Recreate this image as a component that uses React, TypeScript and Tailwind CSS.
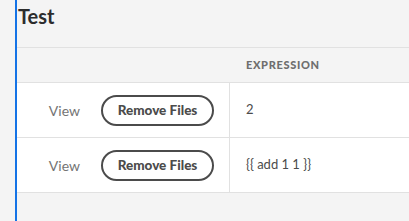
export default function App() {
  const rows = ["2", "{{ add 1 1 }}"];

  return (
    <div className="flex h-[221px] w-full bg-[#f4f4f4] font-['Lato',sans-serif]">
      <div className="w-[15px] shrink-0" />
      <div className="flex-1 border-l-2 border-[#1473e6]">
        <h1 className="flex h-[47px] items-start pl-[1px] pt-[2px] text-[20px] font-bold leading-[28px] text-[#2c2c2c]">
          Test
        </h1>
        <div className="border-t border-[#e1e1e1]">
          <div className="flex h-[35px] border-b border-[#e1e1e1]">
            <div className="w-[213px] shrink-0" />
            <div className="flex items-center pl-[16px] text-[11px] font-black tracking-[0.06em] text-[#6e6e6e]">
              EXPRESSION
            </div>
          </div>
          {rows.map((value) => (
            <div key={value} className="flex h-[55px] border-b border-[#e1e1e1] bg-white">
              <div className="flex w-[213px] shrink-0 items-center justify-end gap-[21px] border-r border-[#e1e1e1] pr-[15px]">
                <span className="text-[14px] text-[#747474]">View</span>
                <button className="h-[31px] w-[113px] rounded-full border-2 border-[#4b4b4b] text-[13.5px] font-black text-[#4b4b4b]">
                  Remove Files
                </button>
              </div>
              <div className="flex items-center pl-[16px] text-[13px] text-[#4b4b4b]">{value}</div>
            </div>
          ))}
        </div>
      </div>
    </div>
  );
}
